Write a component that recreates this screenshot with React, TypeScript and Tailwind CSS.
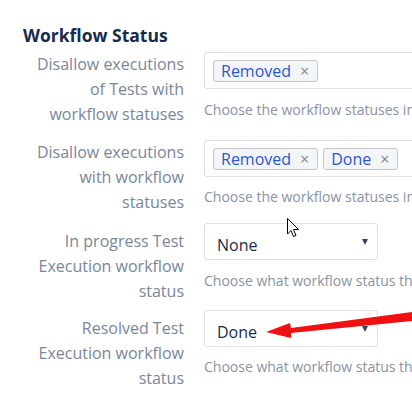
import React from "react";

const Tag: React.FC<{ label: string }> = ({ label }) => (
    <span className="flex items-center h-[22px] pl-[7px] pr-[8px] border border-[#c1c7d0] bg-[#f4f5f7] rounded-[3px] text-[16px] text-[#2d55d6]">
        {label}
        <span className="ml-[9px] text-[16px] leading-none text-[#7a869a]">×</span>
    </span>
);

const Select: React.FC<{ value: string }> = ({ value }) => (
    <div className="relative flex items-center w-[174px] h-[37px] pl-[12px] pt-[7px] border border-[#dfe1e6] rounded-[3px] text-[16px] text-[#172b4d]">
        {value}
        <div className="absolute right-[9px] top-[15px] w-0 h-0 border-l-[3.5px] border-r-[3.5px] border-t-[6px] border-l-transparent border-r-transparent border-t-[#344563]" />
    </div>
);

const Help: React.FC<{ text: string; mt: string }> = ({ text, mt }) => (
    <p className={`${mt} leading-[20px] text-[14px] text-[#8993a4] whitespace-nowrap`}>{text}</p>
);

const App: React.FC = () => {
    return (
        <div
            className="relative w-[412px] h-[420px] overflow-hidden bg-white"
            style={{ fontFamily: '"Open Sans", "Noto Sans", sans-serif' }}
        >
            <div className="pl-[23px] pt-[24px]">
                <h2 className="h-[22px] leading-[22px] text-[17.5px] font-bold text-[#172b4d]">
                    Workflow Status
                </h2>

                {/* Disallow executions of Tests */}
                <div className="flex mt-[6px]">
                    <div className="w-[161px] shrink-0 text-right text-[16px] leading-[25px] text-[#7a869a]">
                        Disallow executions of Tests with workflow statuses
                    </div>
                    <div className="ml-[20px]">
                        <div className="flex items-center gap-[5px] w-[260px] h-[37px] pl-[8px] border border-[#dfe1e6] rounded-[3px]">
                            <Tag label="Removed" />
                        </div>
                        <Help mt="mt-[11px]" text="Choose the workflow statuses in which test executions are not allowed." />
                    </div>
                </div>

                {/* Disallow executions */}
                <div className="flex mt-[13px]">
                    <div className="w-[161px] shrink-0 text-right text-[16px] leading-[25px] text-[#7a869a]">
                        Disallow executions with workflow statuses
                    </div>
                    <div className="ml-[20px]">
                        <div className="flex items-center gap-[5px] w-[260px] h-[37px] pl-[8px] border border-[#dfe1e6] rounded-[3px]">
                            <Tag label="Removed" />
                            <Tag label="Done" />
                        </div>
                        <Help mt="mt-[10px]" text="Choose the workflow statuses in which executions are not allowed." />
                    </div>
                </div>

                {/* In progress */}
                <div className="flex mt-[8px]">
                    <div className="w-[161px] shrink-0 pt-[6px] text-right text-[16px] leading-[25px] text-[#7a869a]">
                        In progress Test Execution workflow status
                    </div>
                    <div className="ml-[20px]">
                        <Select value="None" />
                        <Help mt="mt-[11px]" text="Choose what workflow status the Test Execution moves to." />
                    </div>
                </div>

                {/* Resolved */}
                <div className="flex mt-[6px]">
                    <div className="w-[161px] shrink-0 pt-[6px] text-right text-[16px] leading-[25px] text-[#7a869a]">
                        Resolved Test Execution workflow status
                    </div>
                    <div className="ml-[20px]">
                        <Select value="Done" />
                        <Help mt="mt-[10px]" text="Choose what workflow status the Test Execution moves to." />
                    </div>
                </div>
            </div>

            {/* mouse cursor */}
            <svg className="absolute left-[287px] top-[218px]" width="13" height="21" viewBox="0 0 13 21">
                <path
                    d="M0.5 0.5 L0.5 16 L4 12.5 L6.5 18.5 L9 17.5 L6.5 11.5 L11.5 11.5 Z"
                    fill="#ffffff"
                    stroke="#000000"
                    strokeWidth="1"
                    strokeLinejoin="round"
                />
            </svg>

            {/* red annotation arrow */}
            <svg className="absolute left-0 top-0" width="412" height="420" viewBox="0 0 412 420">
                <polygon
                    points="412,312 412,321 291,333 291,338 266,332 290,323 291,328"
                    fill="#ee1111"
                />
            </svg>
        </div>
    );
};

export default App;
